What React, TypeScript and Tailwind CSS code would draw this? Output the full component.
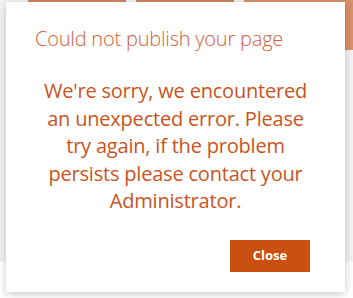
export default function App() {
  return (
    <div className="relative w-[353px] h-[298px] overflow-hidden bg-[#f3f3f3] font-['Open_Sans',sans-serif]">
      {/* background tiles */}
      <div className="flex gap-[10px] pl-[28px]">
        <div className="w-[120px] h-[50px] bg-[#cf8760]" />
        <div className="w-[120px] h-[50px] bg-[#cf8760]" />
        <div className="w-[120px] h-[50px] bg-[#d8916a] text-white text-[16px] pl-[57px] pt-[5px]">o</div>
      </div>
      <div className="h-[212px]" />
      <div className="h-[36px] bg-white" />

      {/* dialog */}
      <div className="absolute left-[6px] top-[2px] w-[339px] h-[290px] bg-white shadow-[0_2px_8px_rgba(0,0,0,0.22)] flex flex-col">
        <h1 className="pl-[29px] pt-[23px] text-[20px] leading-[28px] font-light text-[#d0603a] tracking-[-0.2px]">
          Could not publish your page
        </h1>
        <p className="mt-[24px] text-center text-[20px] leading-[27.6px] text-[#c9541e] tracking-[-0.2px]">
          We're sorry, we encountered
          <br />
          an unexpected error. Please
          <br />
          try again, if the problem
          <br />
          persists please contact your
          <br />
          Administrator.
        </p>
        <div className="flex justify-end pr-[35px] mt-auto mb-[20px]">
          <button className="w-[80px] h-[32px] bg-[#ca5010] text-white text-[13px] font-bold">
            Close
          </button>
        </div>
      </div>
    </div>
  );
}
